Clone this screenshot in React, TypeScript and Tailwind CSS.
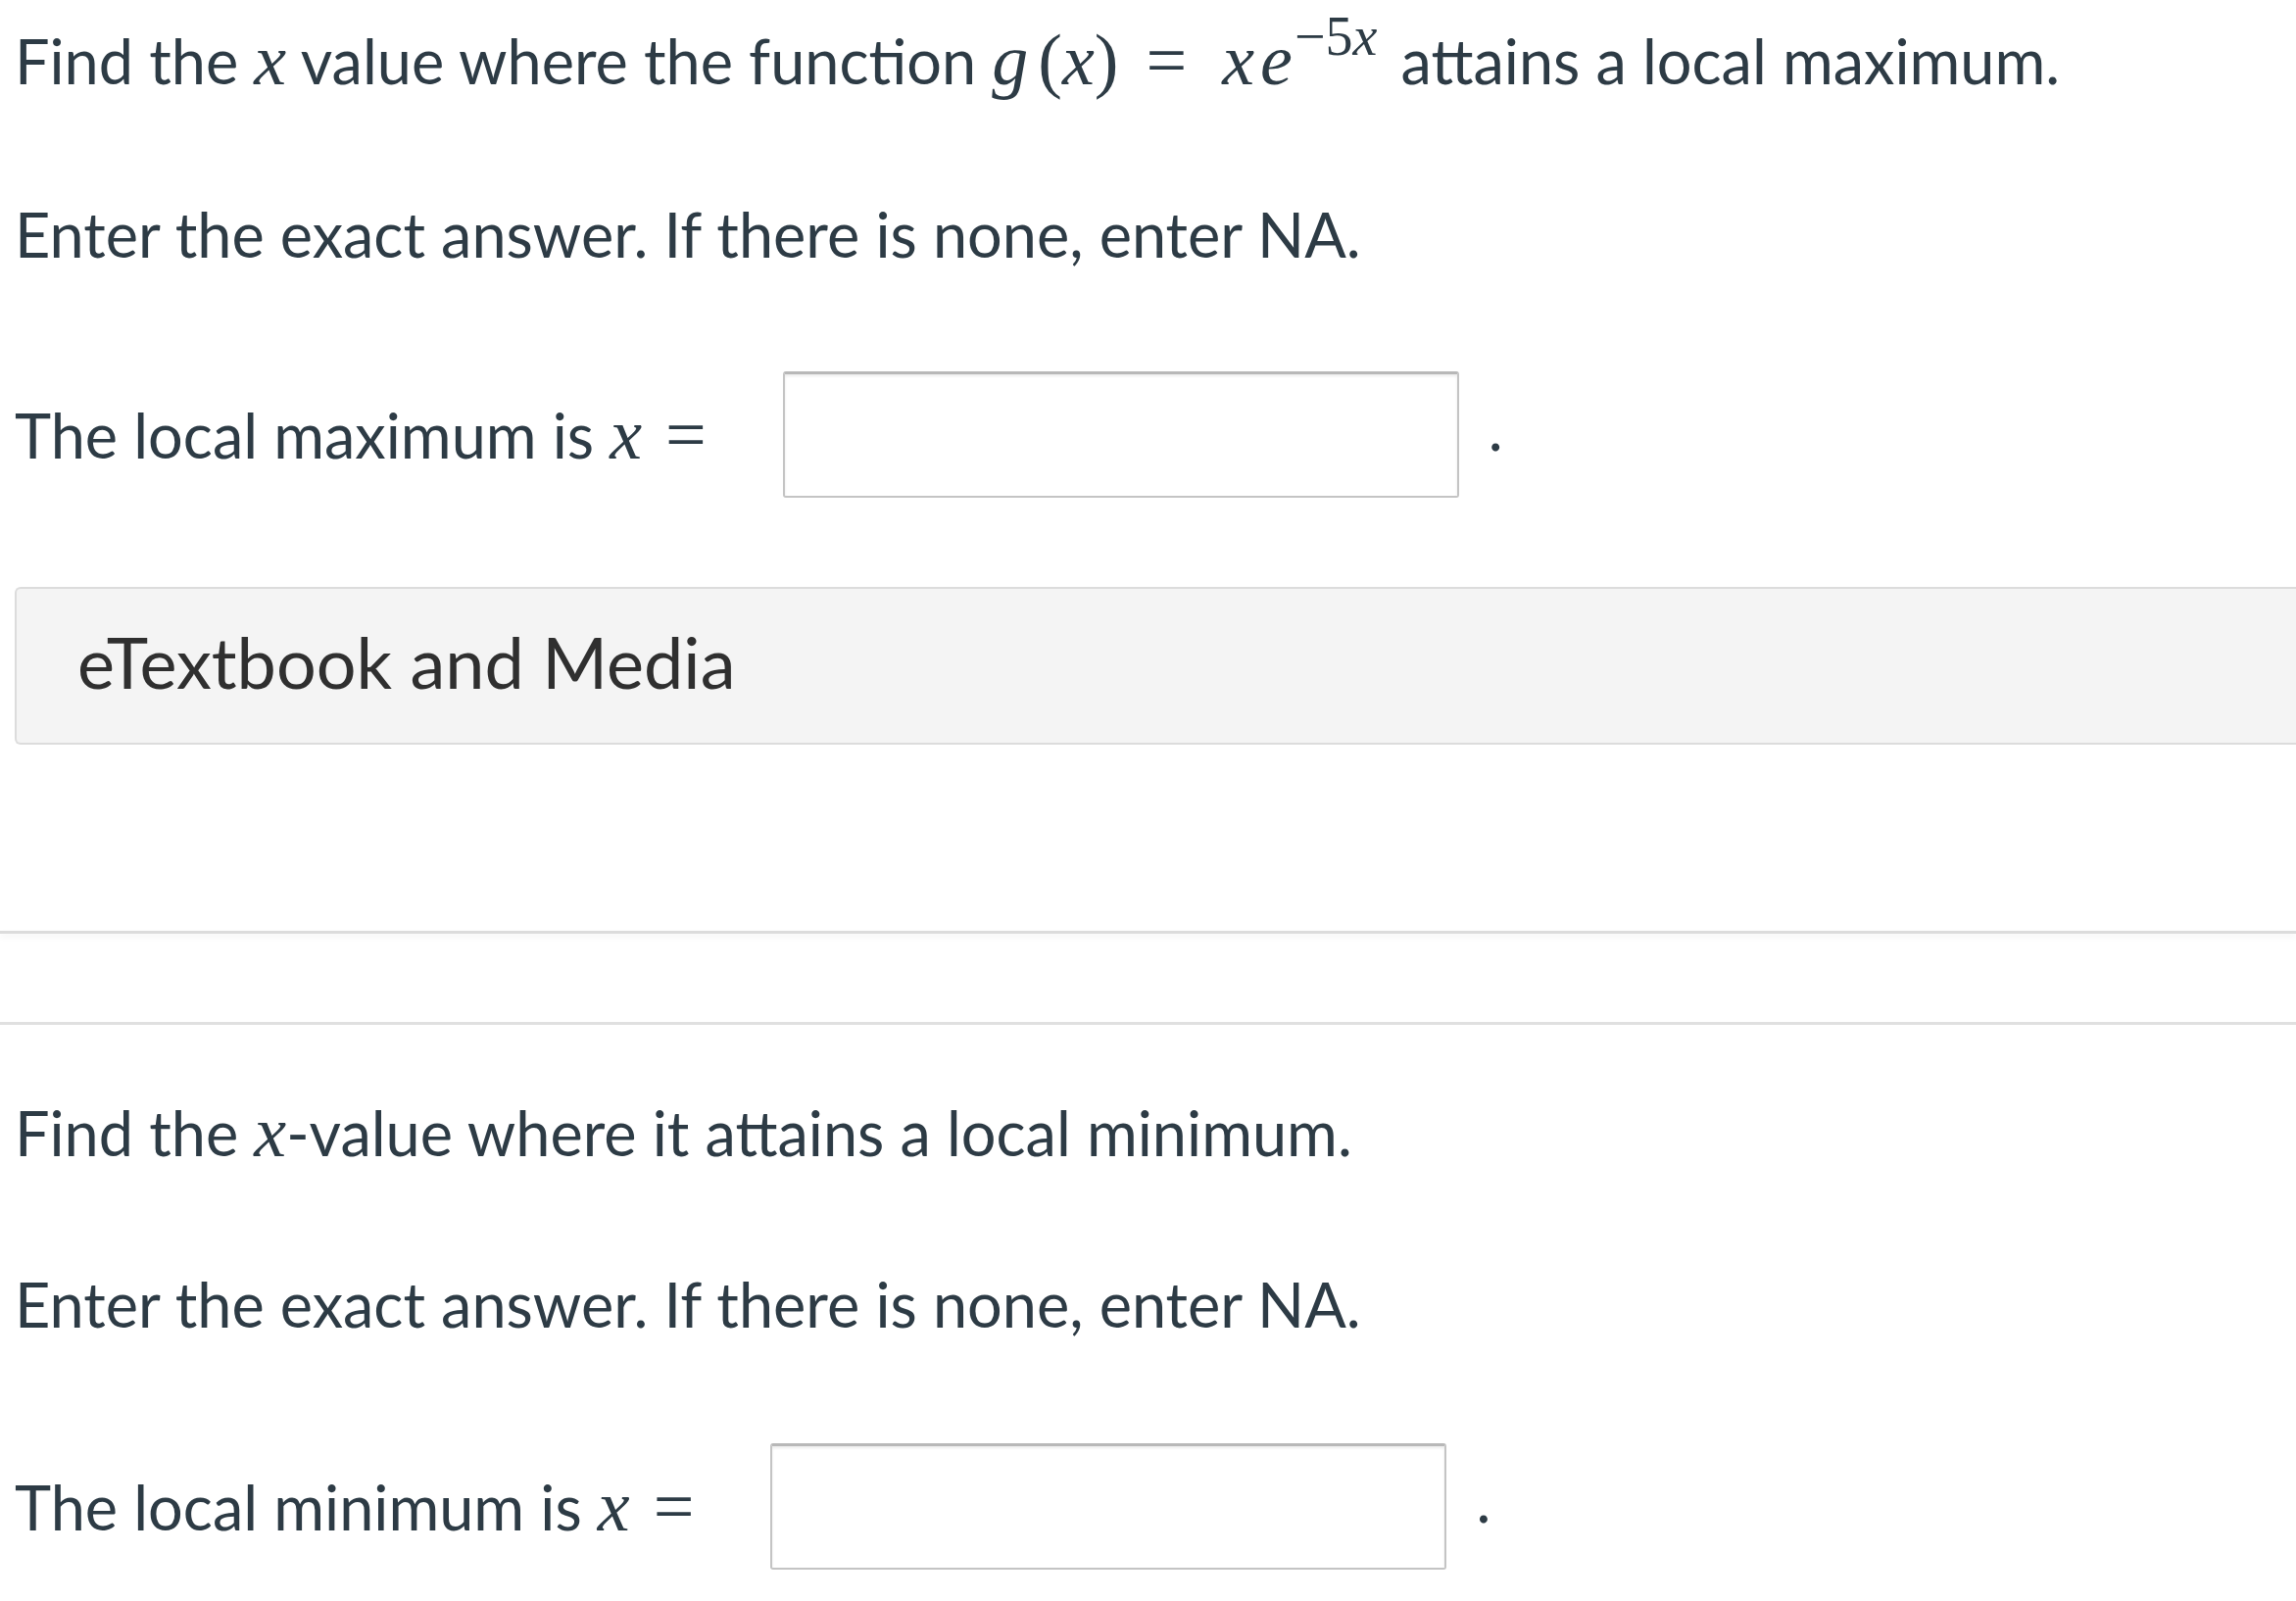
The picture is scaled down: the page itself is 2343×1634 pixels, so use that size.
import React from 'react';

const M = ({ children, className = '' }: { children: React.ReactNode; className?: string }) => (
  <span className={`font-['Liberation_Serif',serif] italic text-[74px] leading-none ${className}`}>{children}</span>
);

const Answer = ({ label }: { label: string }) => (
  <div className="flex items-center h-[129px]">
    <span>
      {label} <M>x</M>
      <span className="font-['Liberation_Serif',serif] text-[74px] leading-none ml-[24px]">=</span>
    </span>
    <input
      type="text"
      className="ml-[78px] w-[690px] h-[129px] border-2 border-[#c4c4c4] border-t-[3px] border-t-[#b8b8b8] rounded-[3px] bg-white shadow-[inset_0_2px_3px_rgba(0,0,0,0.08)] outline-none"
    />
    <span className="ml-[30px] mt-[-16px]">.</span>
  </div>
);

export default function App() {
  return (
    <div className="min-h-screen bg-white text-[#2d3b45] font-['Lato',sans-serif] text-[63px] leading-[76px] overflow-hidden">
      <div className="pl-[15px]">
        <p className="pt-[24px]">
          Find the <M>x</M> value where the function <M>g</M>
          <span className="font-['Liberation_Serif',serif] text-[74px] leading-none ml-[10px]">(</span>
          <M>x</M>
          <span className="font-['Liberation_Serif',serif] text-[74px] leading-none">)</span>
          <span className="font-['Liberation_Serif',serif] text-[74px] leading-none ml-[28px] mr-[36px]">=</span>
          <M className="mr-[2px]">
            <span className="mr-[6px]">x</span>e
          </M>
          <span className="font-['Liberation_Serif',serif] text-[56px] leading-none relative top-[-30px] mr-[8px]">
            −5<i>x</i>
          </span>{' '}
          attains a local maximum.
        </p>
        <p className="mt-[101px]">Enter the exact answer. If there is none, enter NA.</p>
        <div className="mt-[102px]">
          <Answer label="The local maximum is" />
        </div>
      </div>

      <div className="mt-[91px] ml-[15px] h-[161px] bg-[#f4f4f4] border-2 border-r-0 border-[#dcdcdc] rounded-l-[6px] flex items-center pl-[62px] pb-[10px]">
        <span className="text-[72px] text-[#2f2f2f]">eTextbook and Media</span>
      </div>

      <div className="mt-[190px] h-[3px] bg-[#dcdcdc] shadow-[0_3px_6px_rgba(0,0,0,0.06)]" />
      <div className="mt-[90px] h-[3px] bg-[#e0e0e0]" />

      <div className="pl-[15px]">
        <p className="mt-[72px]">
          Find the <M>x</M>-value where it attains a local minimum.
        </p>
        <p className="mt-[99px]">Enter the exact answer. If there is none, enter NA.</p>
        <div className="mt-[104px]">
          <Answer label="The local minimum is" />
        </div>
      </div>
    </div>
  );
}
